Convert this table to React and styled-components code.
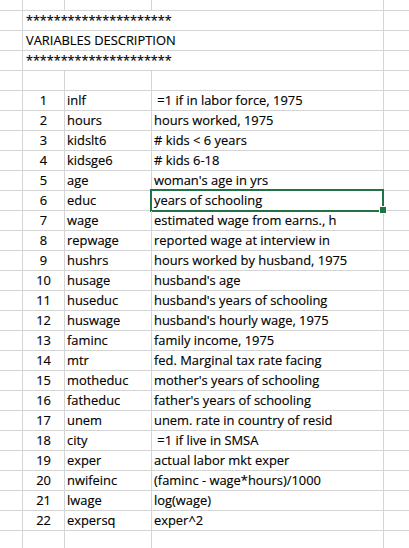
import React from 'react';
import styled, { createGlobalStyle } from 'styled-components';

const GlobalStyle = createGlobalStyle`
  html, body {
    margin: 0;
    padding: 0;
    background: #ffffff;
  }
  body {
    font-family: 'Open Sans', 'Noto Sans', sans-serif;
    overflow: hidden;
  }
`;

const rows = [
  ['inlf', ' =1 if in labor force, 1975'],
  ['hours', 'hours worked, 1975'],
  ['kidslt6', '# kids < 6 years'],
  ['kidsge6', '# kids 6-18'],
  ['age', "woman's age in yrs"],
  ['educ', 'years of schooling'],
  ['wage', 'estimated wage from earns., h'],
  ['repwage', 'reported wage at interview in'],
  ['hushrs', 'hours worked by husband, 1975'],
  ['husage', "husband's age"],
  ['huseduc', "husband's years of schooling"],
  ['huswage', "husband's hourly wage, 1975"],
  ['faminc', 'family income, 1975'],
  ['mtr', 'fed. Marginal tax rate facing'],
  ['motheduc', "mother's years of schooling"],
  ['fatheduc', "father's years of schooling"],
  ['unem', 'unem. rate in country of resid'],
  ['city', ' =1 if live in SMSA'],
  ['exper', 'actual labor mkt exper'],
  ['nwifeinc', '(faminc - wage*hours)/1000'],
  ['lwage', 'log(wage)'],
  ['expersq', 'exper^2'],
];

const EmptyRow = ({ first }) => (
  <Row $first={first}>
    <Cell />
    <Cell />
    <Cell />
    <Cell />
    <Cell $last />
  </Row>
);

const App = () => {
  return (
    <>
      <GlobalStyle />
      <Sheet>
        <EmptyRow first />
        <Row>
          <Cell />
          <Wide $stars>*********************</Wide>
          <Cell $last />
        </Row>
        <Row>
          <Cell />
          <Wide>VARIABLES DESCRIPTION</Wide>
          <Cell $last />
        </Row>
        <Row>
          <Cell />
          <Wide $stars>*********************</Wide>
          <Cell $last />
        </Row>
        <EmptyRow />
        {rows.map(([name, desc], i) => (
          <Row key={name}>
            <Cell />
            <Cell $center>{i + 1}</Cell>
            <Cell>{name}</Cell>
            <Cell $selected={name === 'educ'}>{desc}</Cell>
            <Cell $last />
          </Row>
        ))}
        <EmptyRow />
      </Sheet>
    </>
  );
};

export default App;

//Styles

const Sheet = styled.div`
  width: 409px;
  height: 548px;
  overflow: hidden;
  background: #ffffff;
  color: #000000;
  font-size: 12.9px;
  -webkit-text-stroke: 0.15px #000000;
`;

const Row = styled.div`
  display: grid;
  grid-template-columns: 23px 42px 87px 232px 25px;
  height: ${(p) => (p.$first ? '11px' : '20px')};
  box-sizing: border-box;
  border-bottom: 1px solid #d4d4d4;
`;

const Cell = styled.div`
  position: relative;
  box-sizing: border-box;
  border-right: ${(p) => (p.$last ? 'none' : '1px solid #d4d4d4')};
  padding: 0 2px;
  line-height: 19px;
  white-space: pre;
  overflow: visible;
  text-align: ${(p) => (p.$center ? 'center' : 'left')};

  ${(p) =>
    p.$selected &&
    `
    &::after {
      content: '';
      position: absolute;
      left: -2px;
      top: -2px;
      right: -1px;
      bottom: -2px;
      border: 2px solid #217346;
      pointer-events: none;
    }
    &::before {
      content: '';
      position: absolute;
      right: -4px;
      bottom: -4px;
      width: 6px;
      height: 6px;
      background: #217346;
      border: 1px solid #ffffff;
      z-index: 2;
    }
  `}
`;

const Wide = styled.div`
  grid-column: span 3;
  box-sizing: border-box;
  border-right: 1px solid #d4d4d4;
  padding: 0 3px;
  line-height: 19px;
  white-space: pre;
  font-size: ${(p) => (p.$stars ? '12.6px' : 'inherit')};
`;
